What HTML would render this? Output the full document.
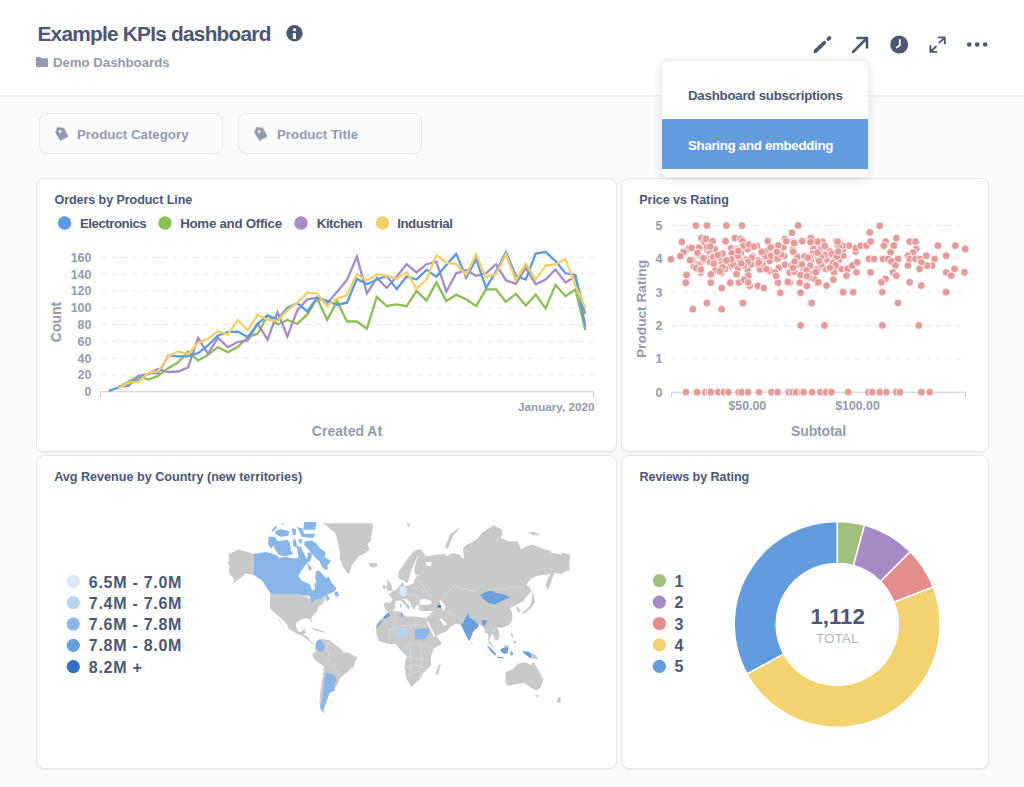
<!DOCTYPE html>
<html><head><meta charset="utf-8">
<style>
*{box-sizing:border-box;margin:0;padding:0}
html,body{width:1024px;height:787px;overflow:hidden;background:#F9FBFC;font-family:"Liberation Sans",sans-serif;color:#4C5773}
.abs{position:absolute}
#hdr{position:absolute;left:0;top:0;width:1024px;height:97px;background:#fff;border-bottom:2px solid #F0F1F3}
.t{position:absolute;white-space:nowrap;font-weight:700;line-height:1}
.card{position:absolute;background:#fff;border:1px solid #E4E6EA;border-radius:8px;box-shadow:0 1px 2px rgba(0,0,0,0.06)}
.filter{position:absolute;top:113px;height:41px;border:1.5px solid #E6E8EB;border-radius:8px;background:#FAFBFC}
.menu{position:absolute;left:661px;top:60px;width:208px;height:118px;background:#fff;border:1px solid #EDEFF2;border-radius:7px;box-shadow:0 0 10px rgba(0,0,0,0.07),0 4px 10px rgba(0,0,0,0.05);overflow:hidden}
</style></head>
<body>
<div id="hdr"></div>
<div class="t" style="left:37.5px;top:23.8px;font-size:20.8px;letter-spacing:-0.75px;color:#4C5773">Example KPIs dashboard</div>
<!-- info icon -->
<svg class="abs" style="left:286px;top:25px" width="17" height="17" viewBox="0 0 17 17"><circle cx="8.5" cy="8.3" r="8.2" fill="#4C5773"/><rect x="6.9" y="8.2" width="3.1" height="5.7" fill="#fff"/><rect x="6.9" y="3.2" width="3.1" height="3.1" rx="1.3" fill="#fff"/></svg>
<!-- folder icon -->
<svg class="abs" style="left:36px;top:57px" width="12" height="10" viewBox="0 0 12 10"><path d="M0 1 Q0 0 1 0 H4.5 L5.5 1.2 H11 Q12 1.2 12 2.2 V9 Q12 10 11 10 H1 Q0 10 0 9 Z" fill="#949AAB"/></svg>
<div class="t" style="left:53px;top:56px;font-size:13.2px;color:#949AAB">Demo Dashboards</div>

<!-- header icons -->
<svg class="abs" style="left:805px;top:30px" width="30" height="30" viewBox="0 0 30 30"><path d="M10.7 20.9 L19.4 12.7" stroke="#4C5773" stroke-width="3.7" stroke-linecap="round"/><path d="M23.3 9.0 L24.5 7.9" stroke="#4C5773" stroke-width="3.7" stroke-linecap="round"/><path d="M9 19.6 L12 22.6 L8.6 23.6 Z" fill="#4C5773"/></svg>
<svg class="abs" style="left:849px;top:34px" width="22" height="22" viewBox="0 0 22 22"><path d="M4 18 L17.5 4.5 M8.5 4 H18 V13.5" stroke="#4C5773" stroke-width="2.6" fill="none" stroke-linecap="round" stroke-linejoin="round"/></svg>
<svg class="abs" style="left:889px;top:35px" width="20" height="20" viewBox="0 0 20 20"><circle cx="10.2" cy="9.6" r="9" fill="#4C5773"/><path d="M10.8 4.8 V10.2 L7.6 12.6" stroke="#fff" stroke-width="1.8" fill="none" stroke-linecap="round" stroke-linejoin="round"/></svg>
<svg class="abs" style="left:926px;top:34px" width="22" height="22" viewBox="0 0 22 22"><path d="M13.4 8.6 L18.2 4.1 M12.6 3.4 H18.8 V9.4 M9.8 12.7 L5 17.2 M4.4 11.9 V17.9 H10.6" stroke="#4C5773" stroke-width="1.9" fill="none" stroke-linecap="round" stroke-linejoin="miter"/></svg>
<svg class="abs" style="left:965px;top:40px" width="24" height="9" viewBox="0 0 24 9"><circle cx="4.2" cy="4.5" r="2.3" fill="#4C5773"/><circle cx="12.2" cy="4.5" r="2.3" fill="#4C5773"/><circle cx="20.2" cy="4.5" r="2.3" fill="#4C5773"/></svg>

<!-- filters -->
<div class="filter" style="left:39px;width:184px"></div>
<div class="filter" style="left:238px;width:184px"></div>
<svg class="abs" style="left:55px;top:127px" width="14" height="14" viewBox="0 0 14 14"><path d="M2.3 0.5 L8.7 1.0 L13.1 9.3 L5.5 13.7 L0.6 5.5 Z" fill="#949AAB" stroke="#949AAB" stroke-width="0.6" stroke-linejoin="round"/><circle cx="5.2" cy="4.4" r="1.3" fill="#FAFBFC"/></svg>
<div class="t" style="left:77px;top:128px;font-size:13.3px;color:#949AAB">Product Category</div>
<svg class="abs" style="left:254px;top:127px" width="14" height="14" viewBox="0 0 14 14"><path d="M2.3 0.5 L8.7 1.0 L13.1 9.3 L5.5 13.7 L0.6 5.5 Z" fill="#949AAB" stroke="#949AAB" stroke-width="0.6" stroke-linejoin="round"/><circle cx="5.2" cy="4.4" r="1.3" fill="#FAFBFC"/></svg>
<div class="t" style="left:277px;top:128px;font-size:13.3px;color:#949AAB">Product Title</div>

<!-- cards -->
<div class="card" style="left:36px;top:178px;width:581px;height:274px"></div>
<div class="card" style="left:621px;top:178px;width:368px;height:274px"></div>
<div class="card" style="left:36px;top:455px;width:581px;height:314px"></div>
<div class="card" style="left:621px;top:455px;width:368px;height:314px"></div>

<svg class="abs" style="left:0;top:0" width="1024" height="787">
<line x1="101.9" y1="374.9" x2="594" y2="374.9" stroke="#E8EBEE" stroke-width="1" stroke-dasharray="5.2 4.95"/>
<line x1="101.9" y1="358.1" x2="594" y2="358.1" stroke="#E8EBEE" stroke-width="1" stroke-dasharray="5.2 4.95"/>
<line x1="101.9" y1="341.3" x2="594" y2="341.3" stroke="#E8EBEE" stroke-width="1" stroke-dasharray="5.2 4.95"/>
<line x1="101.9" y1="324.5" x2="594" y2="324.5" stroke="#E8EBEE" stroke-width="1" stroke-dasharray="5.2 4.95"/>
<line x1="101.9" y1="307.7" x2="594" y2="307.7" stroke="#E8EBEE" stroke-width="1" stroke-dasharray="5.2 4.95"/>
<line x1="101.9" y1="290.9" x2="594" y2="290.9" stroke="#E8EBEE" stroke-width="1" stroke-dasharray="5.2 4.95"/>
<line x1="101.9" y1="274.1" x2="594" y2="274.1" stroke="#E8EBEE" stroke-width="1" stroke-dasharray="5.2 4.95"/>
<line x1="101.9" y1="257.3" x2="594" y2="257.3" stroke="#E8EBEE" stroke-width="1" stroke-dasharray="5.2 4.95"/>
<path d="M100.5 397.5 V391.8 H593.5 V397.5" stroke="#C5CAD3" stroke-width="1" fill="none"/>
<polyline points="118.6,387.5 128.6,381.6 138.5,376.6 148.4,379.5 158.3,375.7 168.3,368.2 178.2,362.3 188.1,351.4 198.1,360.6 208.0,354.7 217.9,347.2 227.9,352.2 237.8,346.8 247.7,337.1 257.6,333.7 267.6,315.3 277.5,324.5 287.4,319.9 297.4,323.7 307.3,314.4 317.2,298.5 327.2,319.9 337.1,301.0 347.0,321.5 356.9,321.5 366.9,328.7 376.8,296.8 386.7,306.0 396.7,304.3 406.6,306.2 416.5,290.9 426.5,300.6 436.4,282.5 446.3,301.0 456.2,294.7 466.2,299.3 476.1,306.2 486.0,289.4 496.0,289.4 505.9,301.8 515.8,293.9 525.8,305.6 535.7,294.7 545.6,308.5 555.5,284.8 565.5,296.3 575.4,289.4 585.3,329.9" fill="none" stroke="#8CBE55" stroke-width="2.3" stroke-linejoin="miter"/>
<polyline points="118.6,386.7 128.6,385.8 138.5,375.7 148.4,374.1 158.3,369.0 168.3,372.0 178.2,371.5 188.1,367.3 198.1,337.9 208.0,353.9 217.9,337.9 227.9,347.2 237.8,342.1 247.7,340.5 257.6,323.7 267.6,339.6 277.5,312.3 287.4,336.3 297.4,310.2 307.3,299.3 317.2,297.6 327.2,303.1 337.1,291.7 347.0,280.0 356.9,256.5 366.9,293.4 376.8,277.9 386.7,287.9 396.7,276.6 406.6,264.2 416.5,272.4 426.5,264.2 436.4,261.9 446.3,291.7 456.2,273.3 466.2,269.9 476.1,275.8 486.0,273.3 496.0,264.2 505.9,280.2 515.8,283.9 525.8,267.8 535.7,284.2 545.6,279.5 555.5,269.5 565.5,282.5 575.4,276.6 585.3,313.8" fill="none" stroke="#A78BC7" stroke-width="2.3" stroke-linejoin="miter"/>
<polyline points="108.7,390.9 118.6,387.5 128.6,383.3 138.5,379.9 148.4,373.2 158.3,373.2 168.3,355.6 178.2,356.4 188.1,356.4 198.1,353.1 208.0,345.5 217.9,335.4 227.9,332.1 237.8,331.6 247.7,337.1 257.6,323.7 267.6,315.3 277.5,319.9 287.4,307.7 297.4,303.1 307.3,311.5 317.2,297.6 327.2,301.0 337.1,304.7 347.0,302.7 356.9,278.7 366.9,284.2 376.8,279.5 386.7,275.8 396.7,289.2 406.6,276.6 416.5,279.5 426.5,269.9 436.4,276.6 446.3,264.9 456.2,253.9 466.2,277.5 476.1,259.0 486.0,287.9 496.0,271.6 505.9,252.3 515.8,275.8 525.8,279.5 535.7,253.5 545.6,251.9 555.5,261.1 565.5,273.3 575.4,274.9 585.3,326.2" fill="none" stroke="#5C9BE0" stroke-width="2.3" stroke-linejoin="miter"/>
<polyline points="118.6,387.9 128.6,382.5 138.5,381.6 148.4,372.8 158.3,371.5 168.3,356.4 178.2,351.4 188.1,353.9 198.1,343.0 208.0,338.8 217.9,331.2 227.9,334.6 237.8,320.3 247.7,330.4 257.6,314.8 267.6,319.9 277.5,320.7 287.4,310.2 297.4,302.7 307.3,292.6 317.2,293.7 327.2,306.0 337.1,298.5 347.0,295.1 356.9,274.1 366.9,280.8 376.8,274.1 386.7,275.8 396.7,278.7 406.6,272.4 416.5,288.6 426.5,279.5 436.4,255.0 446.3,262.7 456.2,264.2 466.2,274.9 476.1,254.3 486.0,277.1 496.0,274.1 505.9,254.3 515.8,280.2 525.8,264.0 535.7,279.5 545.6,265.7 555.5,264.4 565.5,259.0 575.4,285.9 585.3,307.7" fill="none" stroke="#F3CF66" stroke-width="2.3" stroke-linejoin="miter"/>
<line x1="672" y1="358.8" x2="966" y2="358.8" stroke="#E8EBEE" stroke-width="1" stroke-dasharray="5.2 4.95"/>
<line x1="672" y1="325.4" x2="966" y2="325.4" stroke="#E8EBEE" stroke-width="1" stroke-dasharray="5.2 4.95"/>
<line x1="672" y1="292.1" x2="966" y2="292.1" stroke="#E8EBEE" stroke-width="1" stroke-dasharray="5.2 4.95"/>
<line x1="672" y1="258.7" x2="966" y2="258.7" stroke="#E8EBEE" stroke-width="1" stroke-dasharray="5.2 4.95"/>
<line x1="672" y1="225.3" x2="966" y2="225.3" stroke="#E8EBEE" stroke-width="1" stroke-dasharray="5.2 4.95"/>
<path d="M671.5 397.5 V392.2 H965.5 V397.5" stroke="#C5CAD3" stroke-width="1" fill="none"/>
<circle cx="695.9" cy="225.6" r="3.9" fill="#E39C9B" stroke="#fff" stroke-width="0.8"/>
<circle cx="706.9" cy="225.6" r="3.9" fill="#E39C9B" stroke="#fff" stroke-width="0.8"/>
<circle cx="726.4" cy="225.6" r="3.9" fill="#E39C9B" stroke="#fff" stroke-width="0.8"/>
<circle cx="742.0" cy="225.6" r="3.9" fill="#E39C9B" stroke="#fff" stroke-width="0.8"/>
<circle cx="798.3" cy="225.6" r="3.9" fill="#E39C9B" stroke="#fff" stroke-width="0.8"/>
<circle cx="681.9" cy="242.0" r="3.9" fill="#E39C9B" stroke="#fff" stroke-width="0.8"/>
<circle cx="701.4" cy="238.1" r="3.9" fill="#E39C9B" stroke="#fff" stroke-width="0.8"/>
<circle cx="704.5" cy="242.0" r="3.9" fill="#E39C9B" stroke="#fff" stroke-width="0.8"/>
<circle cx="688.9" cy="248.3" r="3.9" fill="#E39C9B" stroke="#fff" stroke-width="0.8"/>
<circle cx="683.4" cy="252.2" r="3.9" fill="#E39C9B" stroke="#fff" stroke-width="0.8"/>
<circle cx="680.3" cy="256.1" r="3.9" fill="#E39C9B" stroke="#fff" stroke-width="0.8"/>
<circle cx="670.9" cy="259.2" r="3.9" fill="#E39C9B" stroke="#fff" stroke-width="0.8"/>
<circle cx="692.8" cy="259.2" r="3.9" fill="#E39C9B" stroke="#fff" stroke-width="0.8"/>
<circle cx="699.1" cy="255.3" r="3.9" fill="#E39C9B" stroke="#fff" stroke-width="0.8"/>
<circle cx="706.9" cy="249.1" r="3.9" fill="#E39C9B" stroke="#fff" stroke-width="0.8"/>
<circle cx="714.7" cy="249.1" r="3.9" fill="#E39C9B" stroke="#fff" stroke-width="0.8"/>
<circle cx="720.9" cy="259.2" r="3.9" fill="#E39C9B" stroke="#fff" stroke-width="0.8"/>
<circle cx="725.6" cy="241.2" r="3.9" fill="#E39C9B" stroke="#fff" stroke-width="0.8"/>
<circle cx="735.0" cy="238.1" r="3.9" fill="#E39C9B" stroke="#fff" stroke-width="0.8"/>
<circle cx="740.5" cy="238.9" r="3.9" fill="#E39C9B" stroke="#fff" stroke-width="0.8"/>
<circle cx="731.1" cy="248.3" r="3.9" fill="#E39C9B" stroke="#fff" stroke-width="0.8"/>
<circle cx="736.6" cy="249.1" r="3.9" fill="#E39C9B" stroke="#fff" stroke-width="0.8"/>
<circle cx="745.9" cy="245.9" r="3.9" fill="#E39C9B" stroke="#fff" stroke-width="0.8"/>
<circle cx="741.2" cy="256.9" r="3.9" fill="#E39C9B" stroke="#fff" stroke-width="0.8"/>
<circle cx="747.5" cy="249.1" r="3.9" fill="#E39C9B" stroke="#fff" stroke-width="0.8"/>
<circle cx="756.9" cy="245.9" r="3.9" fill="#E39C9B" stroke="#fff" stroke-width="0.8"/>
<circle cx="761.6" cy="259.2" r="3.9" fill="#E39C9B" stroke="#fff" stroke-width="0.8"/>
<circle cx="766.2" cy="251.4" r="3.9" fill="#E39C9B" stroke="#fff" stroke-width="0.8"/>
<circle cx="771.7" cy="259.2" r="3.9" fill="#E39C9B" stroke="#fff" stroke-width="0.8"/>
<circle cx="767.8" cy="241.2" r="3.9" fill="#E39C9B" stroke="#fff" stroke-width="0.8"/>
<circle cx="774.1" cy="247.5" r="3.9" fill="#E39C9B" stroke="#fff" stroke-width="0.8"/>
<circle cx="785.0" cy="238.9" r="3.9" fill="#E39C9B" stroke="#fff" stroke-width="0.8"/>
<circle cx="792.0" cy="232.7" r="3.9" fill="#E39C9B" stroke="#fff" stroke-width="0.8"/>
<circle cx="792.8" cy="242.0" r="3.9" fill="#E39C9B" stroke="#fff" stroke-width="0.8"/>
<circle cx="792.8" cy="249.1" r="3.9" fill="#E39C9B" stroke="#fff" stroke-width="0.8"/>
<circle cx="802.2" cy="241.2" r="3.9" fill="#E39C9B" stroke="#fff" stroke-width="0.8"/>
<circle cx="810.0" cy="238.9" r="3.9" fill="#E39C9B" stroke="#fff" stroke-width="0.8"/>
<circle cx="810.8" cy="259.2" r="3.9" fill="#E39C9B" stroke="#fff" stroke-width="0.8"/>
<circle cx="816.2" cy="244.4" r="3.9" fill="#E39C9B" stroke="#fff" stroke-width="0.8"/>
<circle cx="817.0" cy="256.9" r="3.9" fill="#E39C9B" stroke="#fff" stroke-width="0.8"/>
<circle cx="699.1" cy="264.7" r="3.9" fill="#E39C9B" stroke="#fff" stroke-width="0.8"/>
<circle cx="700.6" cy="272.5" r="3.9" fill="#E39C9B" stroke="#fff" stroke-width="0.8"/>
<circle cx="711.6" cy="274.8" r="3.9" fill="#E39C9B" stroke="#fff" stroke-width="0.8"/>
<circle cx="716.2" cy="269.4" r="3.9" fill="#E39C9B" stroke="#fff" stroke-width="0.8"/>
<circle cx="721.7" cy="272.5" r="3.9" fill="#E39C9B" stroke="#fff" stroke-width="0.8"/>
<circle cx="730.3" cy="266.2" r="3.9" fill="#E39C9B" stroke="#fff" stroke-width="0.8"/>
<circle cx="733.4" cy="264.7" r="3.9" fill="#E39C9B" stroke="#fff" stroke-width="0.8"/>
<circle cx="738.1" cy="268.6" r="3.9" fill="#E39C9B" stroke="#fff" stroke-width="0.8"/>
<circle cx="736.6" cy="274.1" r="3.9" fill="#E39C9B" stroke="#fff" stroke-width="0.8"/>
<circle cx="747.5" cy="269.4" r="3.9" fill="#E39C9B" stroke="#fff" stroke-width="0.8"/>
<circle cx="748.3" cy="275.6" r="3.9" fill="#E39C9B" stroke="#fff" stroke-width="0.8"/>
<circle cx="756.9" cy="261.6" r="3.9" fill="#E39C9B" stroke="#fff" stroke-width="0.8"/>
<circle cx="760.0" cy="269.4" r="3.9" fill="#E39C9B" stroke="#fff" stroke-width="0.8"/>
<circle cx="769.4" cy="270.9" r="3.9" fill="#E39C9B" stroke="#fff" stroke-width="0.8"/>
<circle cx="778.8" cy="267.8" r="3.9" fill="#E39C9B" stroke="#fff" stroke-width="0.8"/>
<circle cx="785.0" cy="264.7" r="3.9" fill="#E39C9B" stroke="#fff" stroke-width="0.8"/>
<circle cx="789.7" cy="272.5" r="3.9" fill="#E39C9B" stroke="#fff" stroke-width="0.8"/>
<circle cx="794.4" cy="271.7" r="3.9" fill="#E39C9B" stroke="#fff" stroke-width="0.8"/>
<circle cx="797.5" cy="256.9" r="3.9" fill="#E39C9B" stroke="#fff" stroke-width="0.8"/>
<circle cx="803.8" cy="269.4" r="3.9" fill="#E39C9B" stroke="#fff" stroke-width="0.8"/>
<circle cx="806.9" cy="274.1" r="3.9" fill="#E39C9B" stroke="#fff" stroke-width="0.8"/>
<circle cx="814.7" cy="278.8" r="3.9" fill="#E39C9B" stroke="#fff" stroke-width="0.8"/>
<circle cx="816.2" cy="269.4" r="3.9" fill="#E39C9B" stroke="#fff" stroke-width="0.8"/>
<circle cx="686.6" cy="274.8" r="3.9" fill="#E39C9B" stroke="#fff" stroke-width="0.8"/>
<circle cx="685.8" cy="282.7" r="3.9" fill="#E39C9B" stroke="#fff" stroke-width="0.8"/>
<circle cx="710.8" cy="282.7" r="3.9" fill="#E39C9B" stroke="#fff" stroke-width="0.8"/>
<circle cx="721.7" cy="288.1" r="3.9" fill="#E39C9B" stroke="#fff" stroke-width="0.8"/>
<circle cx="730.3" cy="282.7" r="3.9" fill="#E39C9B" stroke="#fff" stroke-width="0.8"/>
<circle cx="738.9" cy="282.7" r="3.9" fill="#E39C9B" stroke="#fff" stroke-width="0.8"/>
<circle cx="749.8" cy="285.8" r="3.9" fill="#E39C9B" stroke="#fff" stroke-width="0.8"/>
<circle cx="757.7" cy="285.8" r="3.9" fill="#E39C9B" stroke="#fff" stroke-width="0.8"/>
<circle cx="763.9" cy="288.1" r="3.9" fill="#E39C9B" stroke="#fff" stroke-width="0.8"/>
<circle cx="778.0" cy="282.7" r="3.9" fill="#E39C9B" stroke="#fff" stroke-width="0.8"/>
<circle cx="789.7" cy="282.7" r="3.9" fill="#E39C9B" stroke="#fff" stroke-width="0.8"/>
<circle cx="799.8" cy="282.7" r="3.9" fill="#E39C9B" stroke="#fff" stroke-width="0.8"/>
<circle cx="806.9" cy="285.8" r="3.9" fill="#E39C9B" stroke="#fff" stroke-width="0.8"/>
<circle cx="817.8" cy="282.7" r="3.9" fill="#E39C9B" stroke="#fff" stroke-width="0.8"/>
<circle cx="780.3" cy="292.8" r="3.9" fill="#E39C9B" stroke="#fff" stroke-width="0.8"/>
<circle cx="800.6" cy="292.8" r="3.9" fill="#E39C9B" stroke="#fff" stroke-width="0.8"/>
<circle cx="706.9" cy="303.0" r="3.9" fill="#E39C9B" stroke="#fff" stroke-width="0.8"/>
<circle cx="742.8" cy="303.0" r="3.9" fill="#E39C9B" stroke="#fff" stroke-width="0.8"/>
<circle cx="810.8" cy="303.0" r="3.9" fill="#E39C9B" stroke="#fff" stroke-width="0.8"/>
<circle cx="692.8" cy="309.2" r="3.9" fill="#E39C9B" stroke="#fff" stroke-width="0.8"/>
<circle cx="721.7" cy="309.2" r="3.9" fill="#E39C9B" stroke="#fff" stroke-width="0.8"/>
<circle cx="810.8" cy="238.2" r="3.9" fill="#E39C9B" stroke="#fff" stroke-width="0.8"/>
<circle cx="822.5" cy="241.6" r="3.9" fill="#E39C9B" stroke="#fff" stroke-width="0.8"/>
<circle cx="817.5" cy="241.6" r="3.9" fill="#E39C9B" stroke="#fff" stroke-width="0.8"/>
<circle cx="813.3" cy="249.0" r="3.9" fill="#E39C9B" stroke="#fff" stroke-width="0.8"/>
<circle cx="822.5" cy="251.5" r="3.9" fill="#E39C9B" stroke="#fff" stroke-width="0.8"/>
<circle cx="829.9" cy="251.5" r="3.9" fill="#E39C9B" stroke="#fff" stroke-width="0.8"/>
<circle cx="810.0" cy="259.0" r="3.9" fill="#E39C9B" stroke="#fff" stroke-width="0.8"/>
<circle cx="811.7" cy="259.0" r="3.9" fill="#E39C9B" stroke="#fff" stroke-width="0.8"/>
<circle cx="818.3" cy="259.0" r="3.9" fill="#E39C9B" stroke="#fff" stroke-width="0.8"/>
<circle cx="823.3" cy="259.0" r="3.9" fill="#E39C9B" stroke="#fff" stroke-width="0.8"/>
<circle cx="826.6" cy="259.8" r="3.9" fill="#E39C9B" stroke="#fff" stroke-width="0.8"/>
<circle cx="834.9" cy="259.0" r="3.9" fill="#E39C9B" stroke="#fff" stroke-width="0.8"/>
<circle cx="839.1" cy="259.8" r="3.9" fill="#E39C9B" stroke="#fff" stroke-width="0.8"/>
<circle cx="843.2" cy="255.7" r="3.9" fill="#E39C9B" stroke="#fff" stroke-width="0.8"/>
<circle cx="843.2" cy="249.0" r="3.9" fill="#E39C9B" stroke="#fff" stroke-width="0.8"/>
<circle cx="849.0" cy="245.7" r="3.9" fill="#E39C9B" stroke="#fff" stroke-width="0.8"/>
<circle cx="837.4" cy="245.7" r="3.9" fill="#E39C9B" stroke="#fff" stroke-width="0.8"/>
<circle cx="842.4" cy="245.7" r="3.9" fill="#E39C9B" stroke="#fff" stroke-width="0.8"/>
<circle cx="855.7" cy="251.5" r="3.9" fill="#E39C9B" stroke="#fff" stroke-width="0.8"/>
<circle cx="855.7" cy="248.2" r="3.9" fill="#E39C9B" stroke="#fff" stroke-width="0.8"/>
<circle cx="860.7" cy="245.7" r="3.9" fill="#E39C9B" stroke="#fff" stroke-width="0.8"/>
<circle cx="866.5" cy="245.7" r="3.9" fill="#E39C9B" stroke="#fff" stroke-width="0.8"/>
<circle cx="870.6" cy="241.6" r="3.9" fill="#E39C9B" stroke="#fff" stroke-width="0.8"/>
<circle cx="869.8" cy="232.4" r="3.9" fill="#E39C9B" stroke="#fff" stroke-width="0.8"/>
<circle cx="879.8" cy="225.8" r="3.9" fill="#E39C9B" stroke="#fff" stroke-width="0.8"/>
<circle cx="885.6" cy="241.6" r="3.9" fill="#E39C9B" stroke="#fff" stroke-width="0.8"/>
<circle cx="883.9" cy="245.7" r="3.9" fill="#E39C9B" stroke="#fff" stroke-width="0.8"/>
<circle cx="896.4" cy="238.2" r="3.9" fill="#E39C9B" stroke="#fff" stroke-width="0.8"/>
<circle cx="893.9" cy="245.7" r="3.9" fill="#E39C9B" stroke="#fff" stroke-width="0.8"/>
<circle cx="890.6" cy="252.4" r="3.9" fill="#E39C9B" stroke="#fff" stroke-width="0.8"/>
<circle cx="869.0" cy="259.0" r="3.9" fill="#E39C9B" stroke="#fff" stroke-width="0.8"/>
<circle cx="874.0" cy="259.0" r="3.9" fill="#E39C9B" stroke="#fff" stroke-width="0.8"/>
<circle cx="883.1" cy="259.0" r="3.9" fill="#E39C9B" stroke="#fff" stroke-width="0.8"/>
<circle cx="888.1" cy="259.0" r="3.9" fill="#E39C9B" stroke="#fff" stroke-width="0.8"/>
<circle cx="898.0" cy="259.0" r="3.9" fill="#E39C9B" stroke="#fff" stroke-width="0.8"/>
<circle cx="891.4" cy="261.5" r="3.9" fill="#E39C9B" stroke="#fff" stroke-width="0.8"/>
<circle cx="895.5" cy="265.6" r="3.9" fill="#E39C9B" stroke="#fff" stroke-width="0.8"/>
<circle cx="810.0" cy="265.6" r="3.9" fill="#E39C9B" stroke="#fff" stroke-width="0.8"/>
<circle cx="817.5" cy="269.0" r="3.9" fill="#E39C9B" stroke="#fff" stroke-width="0.8"/>
<circle cx="825.8" cy="269.0" r="3.9" fill="#E39C9B" stroke="#fff" stroke-width="0.8"/>
<circle cx="834.1" cy="272.3" r="3.9" fill="#E39C9B" stroke="#fff" stroke-width="0.8"/>
<circle cx="831.6" cy="264.8" r="3.9" fill="#E39C9B" stroke="#fff" stroke-width="0.8"/>
<circle cx="841.6" cy="269.0" r="3.9" fill="#E39C9B" stroke="#fff" stroke-width="0.8"/>
<circle cx="847.4" cy="269.0" r="3.9" fill="#E39C9B" stroke="#fff" stroke-width="0.8"/>
<circle cx="852.4" cy="265.6" r="3.9" fill="#E39C9B" stroke="#fff" stroke-width="0.8"/>
<circle cx="857.3" cy="262.3" r="3.9" fill="#E39C9B" stroke="#fff" stroke-width="0.8"/>
<circle cx="856.5" cy="272.3" r="3.9" fill="#E39C9B" stroke="#fff" stroke-width="0.8"/>
<circle cx="846.5" cy="275.6" r="3.9" fill="#E39C9B" stroke="#fff" stroke-width="0.8"/>
<circle cx="810.0" cy="274.0" r="3.9" fill="#E39C9B" stroke="#fff" stroke-width="0.8"/>
<circle cx="814.2" cy="278.9" r="3.9" fill="#E39C9B" stroke="#fff" stroke-width="0.8"/>
<circle cx="818.3" cy="282.3" r="3.9" fill="#E39C9B" stroke="#fff" stroke-width="0.8"/>
<circle cx="826.6" cy="285.6" r="3.9" fill="#E39C9B" stroke="#fff" stroke-width="0.8"/>
<circle cx="843.2" cy="292.2" r="3.9" fill="#E39C9B" stroke="#fff" stroke-width="0.8"/>
<circle cx="853.2" cy="292.2" r="3.9" fill="#E39C9B" stroke="#fff" stroke-width="0.8"/>
<circle cx="870.6" cy="272.3" r="3.9" fill="#E39C9B" stroke="#fff" stroke-width="0.8"/>
<circle cx="885.6" cy="278.9" r="3.9" fill="#E39C9B" stroke="#fff" stroke-width="0.8"/>
<circle cx="881.4" cy="282.3" r="3.9" fill="#E39C9B" stroke="#fff" stroke-width="0.8"/>
<circle cx="882.3" cy="292.2" r="3.9" fill="#E39C9B" stroke="#fff" stroke-width="0.8"/>
<circle cx="893.1" cy="272.3" r="3.9" fill="#E39C9B" stroke="#fff" stroke-width="0.8"/>
<circle cx="896.4" cy="275.6" r="3.9" fill="#E39C9B" stroke="#fff" stroke-width="0.8"/>
<circle cx="898.0" cy="303.0" r="3.9" fill="#E39C9B" stroke="#fff" stroke-width="0.8"/>
<circle cx="811.7" cy="303.0" r="3.9" fill="#E39C9B" stroke="#fff" stroke-width="0.8"/>
<circle cx="909.7" cy="241.6" r="3.9" fill="#E39C9B" stroke="#fff" stroke-width="0.8"/>
<circle cx="915.5" cy="241.6" r="3.9" fill="#E39C9B" stroke="#fff" stroke-width="0.8"/>
<circle cx="916.3" cy="249.0" r="3.9" fill="#E39C9B" stroke="#fff" stroke-width="0.8"/>
<circle cx="913.0" cy="252.4" r="3.9" fill="#E39C9B" stroke="#fff" stroke-width="0.8"/>
<circle cx="908.0" cy="255.7" r="3.9" fill="#E39C9B" stroke="#fff" stroke-width="0.8"/>
<circle cx="909.7" cy="259.0" r="3.9" fill="#E39C9B" stroke="#fff" stroke-width="0.8"/>
<circle cx="915.5" cy="259.0" r="3.9" fill="#E39C9B" stroke="#fff" stroke-width="0.8"/>
<circle cx="920.5" cy="259.0" r="3.9" fill="#E39C9B" stroke="#fff" stroke-width="0.8"/>
<circle cx="926.3" cy="255.7" r="3.9" fill="#E39C9B" stroke="#fff" stroke-width="0.8"/>
<circle cx="934.6" cy="259.0" r="3.9" fill="#E39C9B" stroke="#fff" stroke-width="0.8"/>
<circle cx="932.1" cy="265.6" r="3.9" fill="#E39C9B" stroke="#fff" stroke-width="0.8"/>
<circle cx="927.1" cy="265.6" r="3.9" fill="#E39C9B" stroke="#fff" stroke-width="0.8"/>
<circle cx="921.3" cy="262.3" r="3.9" fill="#E39C9B" stroke="#fff" stroke-width="0.8"/>
<circle cx="908.0" cy="265.6" r="3.9" fill="#E39C9B" stroke="#fff" stroke-width="0.8"/>
<circle cx="919.6" cy="269.0" r="3.9" fill="#E39C9B" stroke="#fff" stroke-width="0.8"/>
<circle cx="909.7" cy="282.3" r="3.9" fill="#E39C9B" stroke="#fff" stroke-width="0.8"/>
<circle cx="921.3" cy="285.6" r="3.9" fill="#E39C9B" stroke="#fff" stroke-width="0.8"/>
<circle cx="937.9" cy="245.7" r="3.9" fill="#E39C9B" stroke="#fff" stroke-width="0.8"/>
<circle cx="955.3" cy="245.7" r="3.9" fill="#E39C9B" stroke="#fff" stroke-width="0.8"/>
<circle cx="965.3" cy="249.0" r="3.9" fill="#E39C9B" stroke="#fff" stroke-width="0.8"/>
<circle cx="946.2" cy="255.7" r="3.9" fill="#E39C9B" stroke="#fff" stroke-width="0.8"/>
<circle cx="946.2" cy="272.3" r="3.9" fill="#E39C9B" stroke="#fff" stroke-width="0.8"/>
<circle cx="954.5" cy="269.0" r="3.9" fill="#E39C9B" stroke="#fff" stroke-width="0.8"/>
<circle cx="951.2" cy="275.6" r="3.9" fill="#E39C9B" stroke="#fff" stroke-width="0.8"/>
<circle cx="964.5" cy="272.3" r="3.9" fill="#E39C9B" stroke="#fff" stroke-width="0.8"/>
<circle cx="946.2" cy="292.2" r="3.9" fill="#E39C9B" stroke="#fff" stroke-width="0.8"/>
<circle cx="737.2" cy="250.8" r="3.9" fill="#E39C9B" stroke="#fff" stroke-width="0.8"/>
<circle cx="699.0" cy="247.7" r="3.9" fill="#E39C9B" stroke="#fff" stroke-width="0.8"/>
<circle cx="769.5" cy="260.8" r="3.9" fill="#E39C9B" stroke="#fff" stroke-width="0.8"/>
<circle cx="765.1" cy="256.3" r="3.9" fill="#E39C9B" stroke="#fff" stroke-width="0.8"/>
<circle cx="693.7" cy="261.9" r="3.9" fill="#E39C9B" stroke="#fff" stroke-width="0.8"/>
<circle cx="701.8" cy="257.2" r="3.9" fill="#E39C9B" stroke="#fff" stroke-width="0.8"/>
<circle cx="752.5" cy="256.4" r="3.9" fill="#E39C9B" stroke="#fff" stroke-width="0.8"/>
<circle cx="721.9" cy="262.9" r="3.9" fill="#E39C9B" stroke="#fff" stroke-width="0.8"/>
<circle cx="783.4" cy="247.1" r="3.9" fill="#E39C9B" stroke="#fff" stroke-width="0.8"/>
<circle cx="748.3" cy="262.6" r="3.9" fill="#E39C9B" stroke="#fff" stroke-width="0.8"/>
<circle cx="836.4" cy="241.0" r="3.9" fill="#E39C9B" stroke="#fff" stroke-width="0.8"/>
<circle cx="732.0" cy="253.3" r="3.9" fill="#E39C9B" stroke="#fff" stroke-width="0.8"/>
<circle cx="709.9" cy="252.8" r="3.9" fill="#E39C9B" stroke="#fff" stroke-width="0.8"/>
<circle cx="812.1" cy="253.3" r="3.9" fill="#E39C9B" stroke="#fff" stroke-width="0.8"/>
<circle cx="715.5" cy="270.3" r="3.9" fill="#E39C9B" stroke="#fff" stroke-width="0.8"/>
<circle cx="744.6" cy="265.2" r="3.9" fill="#E39C9B" stroke="#fff" stroke-width="0.8"/>
<circle cx="771.3" cy="255.7" r="3.9" fill="#E39C9B" stroke="#fff" stroke-width="0.8"/>
<circle cx="719.3" cy="257.4" r="3.9" fill="#E39C9B" stroke="#fff" stroke-width="0.8"/>
<circle cx="791.4" cy="266.0" r="3.9" fill="#E39C9B" stroke="#fff" stroke-width="0.8"/>
<circle cx="777.0" cy="255.1" r="3.9" fill="#E39C9B" stroke="#fff" stroke-width="0.8"/>
<circle cx="756.9" cy="263.8" r="3.9" fill="#E39C9B" stroke="#fff" stroke-width="0.8"/>
<circle cx="794.2" cy="242.9" r="3.9" fill="#E39C9B" stroke="#fff" stroke-width="0.8"/>
<circle cx="725.1" cy="268.9" r="3.9" fill="#E39C9B" stroke="#fff" stroke-width="0.8"/>
<circle cx="821.0" cy="263.8" r="3.9" fill="#E39C9B" stroke="#fff" stroke-width="0.8"/>
<circle cx="798.9" cy="264.9" r="3.9" fill="#E39C9B" stroke="#fff" stroke-width="0.8"/>
<circle cx="705.9" cy="238.7" r="3.9" fill="#E39C9B" stroke="#fff" stroke-width="0.8"/>
<circle cx="751.6" cy="258.4" r="3.9" fill="#E39C9B" stroke="#fff" stroke-width="0.8"/>
<circle cx="762.3" cy="264.0" r="3.9" fill="#E39C9B" stroke="#fff" stroke-width="0.8"/>
<circle cx="694.0" cy="266.5" r="3.9" fill="#E39C9B" stroke="#fff" stroke-width="0.8"/>
<circle cx="775.1" cy="272.5" r="3.9" fill="#E39C9B" stroke="#fff" stroke-width="0.8"/>
<circle cx="821.1" cy="264.3" r="3.9" fill="#E39C9B" stroke="#fff" stroke-width="0.8"/>
<circle cx="778.3" cy="245.4" r="3.9" fill="#E39C9B" stroke="#fff" stroke-width="0.8"/>
<circle cx="776.1" cy="275.9" r="3.9" fill="#E39C9B" stroke="#fff" stroke-width="0.8"/>
<circle cx="831.6" cy="253.8" r="3.9" fill="#E39C9B" stroke="#fff" stroke-width="0.8"/>
<circle cx="760.1" cy="260.4" r="3.9" fill="#E39C9B" stroke="#fff" stroke-width="0.8"/>
<circle cx="794.6" cy="261.5" r="3.9" fill="#E39C9B" stroke="#fff" stroke-width="0.8"/>
<circle cx="786.4" cy="241.3" r="3.9" fill="#E39C9B" stroke="#fff" stroke-width="0.8"/>
<circle cx="731.3" cy="259.4" r="3.9" fill="#E39C9B" stroke="#fff" stroke-width="0.8"/>
<circle cx="746.6" cy="259.7" r="3.9" fill="#E39C9B" stroke="#fff" stroke-width="0.8"/>
<circle cx="758.2" cy="260.4" r="3.9" fill="#E39C9B" stroke="#fff" stroke-width="0.8"/>
<circle cx="713.5" cy="256.3" r="3.9" fill="#E39C9B" stroke="#fff" stroke-width="0.8"/>
<circle cx="804.8" cy="256.5" r="3.9" fill="#E39C9B" stroke="#fff" stroke-width="0.8"/>
<circle cx="707.7" cy="258.5" r="3.9" fill="#E39C9B" stroke="#fff" stroke-width="0.8"/>
<circle cx="820.5" cy="249.4" r="3.9" fill="#E39C9B" stroke="#fff" stroke-width="0.8"/>
<circle cx="700.2" cy="269.9" r="3.9" fill="#E39C9B" stroke="#fff" stroke-width="0.8"/>
<circle cx="822.3" cy="255.0" r="3.9" fill="#E39C9B" stroke="#fff" stroke-width="0.8"/>
<circle cx="812.5" cy="253.7" r="3.9" fill="#E39C9B" stroke="#fff" stroke-width="0.8"/>
<circle cx="751.1" cy="264.4" r="3.9" fill="#E39C9B" stroke="#fff" stroke-width="0.8"/>
<circle cx="742.5" cy="241.1" r="3.9" fill="#E39C9B" stroke="#fff" stroke-width="0.8"/>
<circle cx="710.9" cy="274.3" r="3.9" fill="#E39C9B" stroke="#fff" stroke-width="0.8"/>
<circle cx="714.8" cy="257.9" r="3.9" fill="#E39C9B" stroke="#fff" stroke-width="0.8"/>
<circle cx="761.7" cy="251.9" r="3.9" fill="#E39C9B" stroke="#fff" stroke-width="0.8"/>
<circle cx="777.5" cy="258.7" r="3.9" fill="#E39C9B" stroke="#fff" stroke-width="0.8"/>
<circle cx="751.7" cy="257.8" r="3.9" fill="#E39C9B" stroke="#fff" stroke-width="0.8"/>
<circle cx="744.1" cy="279.8" r="3.9" fill="#E39C9B" stroke="#fff" stroke-width="0.8"/>
<circle cx="793.0" cy="268.0" r="3.9" fill="#E39C9B" stroke="#fff" stroke-width="0.8"/>
<circle cx="766.4" cy="269.1" r="3.9" fill="#E39C9B" stroke="#fff" stroke-width="0.8"/>
<circle cx="696.2" cy="268.1" r="3.9" fill="#E39C9B" stroke="#fff" stroke-width="0.8"/>
<circle cx="824.7" cy="255.1" r="3.9" fill="#E39C9B" stroke="#fff" stroke-width="0.8"/>
<circle cx="809.3" cy="277.4" r="3.9" fill="#E39C9B" stroke="#fff" stroke-width="0.8"/>
<circle cx="747.6" cy="262.2" r="3.9" fill="#E39C9B" stroke="#fff" stroke-width="0.8"/>
<circle cx="784.4" cy="256.1" r="3.9" fill="#E39C9B" stroke="#fff" stroke-width="0.8"/>
<circle cx="697.5" cy="252.8" r="3.9" fill="#E39C9B" stroke="#fff" stroke-width="0.8"/>
<circle cx="712.7" cy="256.1" r="3.9" fill="#E39C9B" stroke="#fff" stroke-width="0.8"/>
<circle cx="739.7" cy="258.5" r="3.9" fill="#E39C9B" stroke="#fff" stroke-width="0.8"/>
<circle cx="711.0" cy="258.6" r="3.9" fill="#E39C9B" stroke="#fff" stroke-width="0.8"/>
<circle cx="703.4" cy="260.1" r="3.9" fill="#E39C9B" stroke="#fff" stroke-width="0.8"/>
<circle cx="820.9" cy="257.1" r="3.9" fill="#E39C9B" stroke="#fff" stroke-width="0.8"/>
<circle cx="781.3" cy="254.4" r="3.9" fill="#E39C9B" stroke="#fff" stroke-width="0.8"/>
<circle cx="740.8" cy="253.0" r="3.9" fill="#E39C9B" stroke="#fff" stroke-width="0.8"/>
<circle cx="743.4" cy="245.7" r="3.9" fill="#E39C9B" stroke="#fff" stroke-width="0.8"/>
<circle cx="839.0" cy="246.0" r="3.9" fill="#E39C9B" stroke="#fff" stroke-width="0.8"/>
<circle cx="758.8" cy="262.6" r="3.9" fill="#E39C9B" stroke="#fff" stroke-width="0.8"/>
<circle cx="703.5" cy="258.3" r="3.9" fill="#E39C9B" stroke="#fff" stroke-width="0.8"/>
<circle cx="740.1" cy="260.3" r="3.9" fill="#E39C9B" stroke="#fff" stroke-width="0.8"/>
<circle cx="712.5" cy="241.2" r="3.9" fill="#E39C9B" stroke="#fff" stroke-width="0.8"/>
<circle cx="691.5" cy="247.8" r="3.9" fill="#E39C9B" stroke="#fff" stroke-width="0.8"/>
<circle cx="710.3" cy="262.2" r="3.9" fill="#E39C9B" stroke="#fff" stroke-width="0.8"/>
<circle cx="770.6" cy="247.4" r="3.9" fill="#E39C9B" stroke="#fff" stroke-width="0.8"/>
<circle cx="836.7" cy="256.7" r="3.9" fill="#E39C9B" stroke="#fff" stroke-width="0.8"/>
<circle cx="819.2" cy="261.1" r="3.9" fill="#E39C9B" stroke="#fff" stroke-width="0.8"/>
<circle cx="743.7" cy="265.5" r="3.9" fill="#E39C9B" stroke="#fff" stroke-width="0.8"/>
<circle cx="713.4" cy="257.1" r="3.9" fill="#E39C9B" stroke="#fff" stroke-width="0.8"/>
<circle cx="806.4" cy="270.1" r="3.9" fill="#E39C9B" stroke="#fff" stroke-width="0.8"/>
<circle cx="738.1" cy="255.8" r="3.9" fill="#E39C9B" stroke="#fff" stroke-width="0.8"/>
<circle cx="837.7" cy="241.8" r="3.9" fill="#E39C9B" stroke="#fff" stroke-width="0.8"/>
<circle cx="817.6" cy="252.7" r="3.9" fill="#E39C9B" stroke="#fff" stroke-width="0.8"/>
<circle cx="800.5" cy="274.9" r="3.9" fill="#E39C9B" stroke="#fff" stroke-width="0.8"/>
<circle cx="722.5" cy="267.4" r="3.9" fill="#E39C9B" stroke="#fff" stroke-width="0.8"/>
<circle cx="692.4" cy="259.6" r="3.9" fill="#E39C9B" stroke="#fff" stroke-width="0.8"/>
<circle cx="692.2" cy="260.0" r="3.9" fill="#E39C9B" stroke="#fff" stroke-width="0.8"/>
<circle cx="793.3" cy="251.6" r="3.9" fill="#E39C9B" stroke="#fff" stroke-width="0.8"/>
<circle cx="833.4" cy="279.5" r="3.9" fill="#E39C9B" stroke="#fff" stroke-width="0.8"/>
<circle cx="838.2" cy="251.5" r="3.9" fill="#E39C9B" stroke="#fff" stroke-width="0.8"/>
<circle cx="833.2" cy="263.0" r="3.9" fill="#E39C9B" stroke="#fff" stroke-width="0.8"/>
<circle cx="722.5" cy="253.7" r="3.9" fill="#E39C9B" stroke="#fff" stroke-width="0.8"/>
<circle cx="717.9" cy="255.0" r="3.9" fill="#E39C9B" stroke="#fff" stroke-width="0.8"/>
<circle cx="824.8" cy="246.1" r="3.9" fill="#E39C9B" stroke="#fff" stroke-width="0.8"/>
<circle cx="815.7" cy="272.2" r="3.9" fill="#E39C9B" stroke="#fff" stroke-width="0.8"/>
<circle cx="809.5" cy="256.9" r="3.9" fill="#E39C9B" stroke="#fff" stroke-width="0.8"/>
<circle cx="700.9" cy="269.6" r="3.9" fill="#E39C9B" stroke="#fff" stroke-width="0.8"/>
<circle cx="806.9" cy="276.0" r="3.9" fill="#E39C9B" stroke="#fff" stroke-width="0.8"/>
<circle cx="802.0" cy="264.5" r="3.9" fill="#E39C9B" stroke="#fff" stroke-width="0.8"/>
<circle cx="807.9" cy="257.9" r="3.9" fill="#E39C9B" stroke="#fff" stroke-width="0.8"/>
<circle cx="738.5" cy="250.8" r="3.9" fill="#E39C9B" stroke="#fff" stroke-width="0.8"/>
<circle cx="748.2" cy="282.4" r="3.9" fill="#E39C9B" stroke="#fff" stroke-width="0.8"/>
<circle cx="749.0" cy="244.5" r="3.9" fill="#E39C9B" stroke="#fff" stroke-width="0.8"/>
<circle cx="713.8" cy="263.6" r="3.9" fill="#E39C9B" stroke="#fff" stroke-width="0.8"/>
<circle cx="707.3" cy="246.9" r="3.9" fill="#E39C9B" stroke="#fff" stroke-width="0.8"/>
<circle cx="810.6" cy="242.2" r="3.9" fill="#E39C9B" stroke="#fff" stroke-width="0.8"/>
<circle cx="710.2" cy="246.6" r="3.9" fill="#E39C9B" stroke="#fff" stroke-width="0.8"/>
<circle cx="787.9" cy="281.9" r="3.9" fill="#E39C9B" stroke="#fff" stroke-width="0.8"/>
<circle cx="741.3" cy="263.4" r="3.9" fill="#E39C9B" stroke="#fff" stroke-width="0.8"/>
<circle cx="690.2" cy="260.2" r="3.9" fill="#E39C9B" stroke="#fff" stroke-width="0.8"/>
<circle cx="835.6" cy="265.4" r="3.9" fill="#E39C9B" stroke="#fff" stroke-width="0.8"/>
<circle cx="829.9" cy="267.9" r="3.9" fill="#E39C9B" stroke="#fff" stroke-width="0.8"/>
<circle cx="753.9" cy="246.6" r="3.9" fill="#E39C9B" stroke="#fff" stroke-width="0.8"/>
<circle cx="720.1" cy="271.3" r="3.9" fill="#E39C9B" stroke="#fff" stroke-width="0.8"/>
<circle cx="726.3" cy="260.5" r="3.9" fill="#E39C9B" stroke="#fff" stroke-width="0.8"/>
<circle cx="777.1" cy="252.0" r="3.9" fill="#E39C9B" stroke="#fff" stroke-width="0.8"/>
<circle cx="686.0" cy="392.2" r="3.9" fill="#E39C9B" stroke="#fff" stroke-width="0.8"/>
<circle cx="696.1" cy="392.2" r="3.9" fill="#E39C9B" stroke="#fff" stroke-width="0.8"/>
<circle cx="697.2" cy="392.2" r="3.9" fill="#E39C9B" stroke="#fff" stroke-width="0.8"/>
<circle cx="705.3" cy="392.2" r="3.9" fill="#E39C9B" stroke="#fff" stroke-width="0.8"/>
<circle cx="709.1" cy="392.2" r="3.9" fill="#E39C9B" stroke="#fff" stroke-width="0.8"/>
<circle cx="710.9" cy="392.2" r="3.9" fill="#E39C9B" stroke="#fff" stroke-width="0.8"/>
<circle cx="718.3" cy="392.2" r="3.9" fill="#E39C9B" stroke="#fff" stroke-width="0.8"/>
<circle cx="723.9" cy="392.2" r="3.9" fill="#E39C9B" stroke="#fff" stroke-width="0.8"/>
<circle cx="728.3" cy="392.2" r="3.9" fill="#E39C9B" stroke="#fff" stroke-width="0.8"/>
<circle cx="738.7" cy="392.2" r="3.9" fill="#E39C9B" stroke="#fff" stroke-width="0.8"/>
<circle cx="741.7" cy="392.2" r="3.9" fill="#E39C9B" stroke="#fff" stroke-width="0.8"/>
<circle cx="748.0" cy="392.2" r="3.9" fill="#E39C9B" stroke="#fff" stroke-width="0.8"/>
<circle cx="759.1" cy="392.2" r="3.9" fill="#E39C9B" stroke="#fff" stroke-width="0.8"/>
<circle cx="771.4" cy="392.2" r="3.9" fill="#E39C9B" stroke="#fff" stroke-width="0.8"/>
<circle cx="777.7" cy="392.2" r="3.9" fill="#E39C9B" stroke="#fff" stroke-width="0.8"/>
<circle cx="788.8" cy="392.2" r="3.9" fill="#E39C9B" stroke="#fff" stroke-width="0.8"/>
<circle cx="792.5" cy="392.2" r="3.9" fill="#E39C9B" stroke="#fff" stroke-width="0.8"/>
<circle cx="796.3" cy="392.2" r="3.9" fill="#E39C9B" stroke="#fff" stroke-width="0.8"/>
<circle cx="801.8" cy="392.2" r="3.9" fill="#E39C9B" stroke="#fff" stroke-width="0.8"/>
<circle cx="803.7" cy="392.2" r="3.9" fill="#E39C9B" stroke="#fff" stroke-width="0.8"/>
<circle cx="812.2" cy="392.2" r="3.9" fill="#E39C9B" stroke="#fff" stroke-width="0.8"/>
<circle cx="820.4" cy="392.2" r="3.9" fill="#E39C9B" stroke="#fff" stroke-width="0.8"/>
<circle cx="825.9" cy="392.2" r="3.9" fill="#E39C9B" stroke="#fff" stroke-width="0.8"/>
<circle cx="831.5" cy="392.2" r="3.9" fill="#E39C9B" stroke="#fff" stroke-width="0.8"/>
<circle cx="848.2" cy="392.2" r="3.9" fill="#E39C9B" stroke="#fff" stroke-width="0.8"/>
<circle cx="868.6" cy="392.2" r="3.9" fill="#E39C9B" stroke="#fff" stroke-width="0.8"/>
<circle cx="872.3" cy="392.2" r="3.9" fill="#E39C9B" stroke="#fff" stroke-width="0.8"/>
<circle cx="879.7" cy="392.2" r="3.9" fill="#E39C9B" stroke="#fff" stroke-width="0.8"/>
<circle cx="886.4" cy="392.2" r="3.9" fill="#E39C9B" stroke="#fff" stroke-width="0.8"/>
<circle cx="896.4" cy="392.2" r="3.9" fill="#E39C9B" stroke="#fff" stroke-width="0.8"/>
<circle cx="900.1" cy="392.2" r="3.9" fill="#E39C9B" stroke="#fff" stroke-width="0.8"/>
<circle cx="921.3" cy="392.2" r="3.9" fill="#E39C9B" stroke="#fff" stroke-width="0.8"/>
<circle cx="929.8" cy="392.2" r="3.9" fill="#E39C9B" stroke="#fff" stroke-width="0.8"/>
<circle cx="800.7" cy="325.4" r="3.9" fill="#E39C9B" stroke="#fff" stroke-width="0.8"/>
<circle cx="824.5" cy="325.4" r="3.9" fill="#E39C9B" stroke="#fff" stroke-width="0.8"/>
<circle cx="882.3" cy="325.4" r="3.9" fill="#E39C9B" stroke="#fff" stroke-width="0.8"/>
<circle cx="918.7" cy="325.4" r="3.9" fill="#E39C9B" stroke="#fff" stroke-width="0.8"/>
<path d="M837.20 521.40 A103 103 0 0 1 864.55 525.10 L853.40 565.59 A61 61 0 0 0 837.20 563.40Z" fill="#A1C07E" stroke="#fff" stroke-width="1.5" stroke-linejoin="round"/>
<path d="M864.55 525.10 A103 103 0 0 1 910.29 551.82 L880.48 581.42 A61 61 0 0 0 853.40 565.59Z" fill="#A78BC6" stroke="#fff" stroke-width="1.5" stroke-linejoin="round"/>
<path d="M910.29 551.82 A103 103 0 0 1 933.16 586.99 L894.03 602.24 A61 61 0 0 0 880.48 581.42Z" fill="#E38E8C" stroke="#fff" stroke-width="1.5" stroke-linejoin="round"/>
<path d="M933.16 586.99 A103 103 0 0 1 746.94 674.02 L783.75 653.79 A61 61 0 0 0 894.03 602.24Z" fill="#F2D370" stroke="#fff" stroke-width="1.5" stroke-linejoin="round"/>
<path d="M746.94 674.02 A103 103 0 0 1 837.20 521.40 L837.20 563.40 A61 61 0 0 0 783.75 653.79Z" fill="#629CDE" stroke="#fff" stroke-width="1.5" stroke-linejoin="round"/>
<path d="M253.7 553.8 L239.0 549.4 L231.7 552.4 L228.8 556.0 L230.3 558.9 L227.3 563.3 L229.5 566.3 L228.8 570.7 L230.3 575.1 L234.6 579.4 L232.5 583.8 L240.5 578.0 L245.6 573.6 L253.7 575.1Z" fill="#C9C9C9"/>
<path d="M253.7 553.8 L265.8 551.9 L272.9 553.7 L278.1 556.3 L279.0 558.1 L285.2 556.7 L292.2 558.5 L297.5 558.1 L301.4 554.6 L305.2 558.4 L306.8 559.1 L309.1 554.6 L311.3 556.9 L309.8 561.4 L306.8 563.0 L301.4 570.6 L298.4 575.9 L301.4 580.5 L309.8 584.3 L312.1 590.4 L315.2 589.6 L314.4 585.1 L316.3 582.0 L315.2 577.4 L315.9 571.3 L319.0 570.6 L323.5 575.2 L325.8 578.2 L328.9 576.7 L331.2 582.0 L336.5 588.1 L335.0 591.2 L328.1 594.2 L322.0 598.0 L316.7 601.8 L311.3 604.1 L309.8 595.7 L305.2 595.4 L297.6 594.6 L290.0 595.0 L271.3 594.1 L266.9 588.2 L262.5 580.9 L253.7 575.1Z" fill="#89B5E8"/>
<path d="M273.4 542.0 L278.9 540.9 L287.7 539.8 L289.9 543.1 L291.0 550.7 L293.2 554.0 L285.5 556.2 L278.9 555.1 L274.5 548.5Z" fill="#89B5E8"/>
<path d="M268.6 536.7 L275.2 536.7 L277.4 541.1 L273.0 546.6 L270.8 548.8 L268.1 544.4Z" fill="#89B5E8"/>
<path d="M275.0 531.3 L280.5 529.1 L289.3 531.3 L288.2 535.7 L280.5 536.8 L276.1 534.6Z" fill="#89B5E8"/>
<path d="M271.4 530.2 L275.8 525.8 L276.9 528.0 L272.5 531.8Z" fill="#89B5E8"/>
<path d="M280.9 523.2 L283.7 523.2 L282.6 525.1Z" fill="#89B5E8"/>
<path d="M304.3 522.1 L316.4 522.1 L315.3 529.8 L303.2 529.8Z" fill="#89B5E8"/>
<path d="M296.7 527.1 L302.2 528.2 L304.4 533.7 L315.4 533.7 L313.2 538.1 L302.2 537.0 L298.9 530.4Z" fill="#89B5E8"/>
<path d="M291.7 528.4 L296.1 528.9 L295.6 535.0 L292.8 535.0Z" fill="#89B5E8"/>
<path d="M292.6 539.7 L295.9 539.7 L297.0 546.3 L294.8 547.4 L293.2 545.2Z" fill="#89B5E8"/>
<path d="M297.8 539.2 L302.2 539.2 L301.1 544.7Z" fill="#89B5E8"/>
<path d="M296.4 545.8 L300.8 546.9 L304.1 553.5 L307.4 561.2 L303.0 562.3 L298.6 556.8Z" fill="#89B5E8"/>
<path d="M307.6 552.8 L312.0 552.8 L310.9 560.5 L307.6 561.6Z" fill="#89B5E8"/>
<path d="M306.5 562.4 L312.0 567.9 L309.8 571.2Z" fill="#89B5E8"/>
<path d="M304.5 541.4 L311.5 540.5 L315.9 543.1 L320.3 548.4 L325.6 551.9 L324.7 557.2 L331.0 560.7 L328.9 563.7 L327.4 565.2 L328.1 569.1 L325.1 569.8 L322.0 566.8 L319.7 561.4 L316.7 559.1 L313.0 555.0 L308.0 549.0 L304.5 545.0Z" fill="#89B5E8"/>
<path d="M334.2 592.7 L337.3 591.2 L339.2 595.7 L335.7 596.7Z" fill="#89B5E8"/>
<path d="M325.1 595.0 L328.1 595.7 L329.6 598.8 L327.4 601.8Z" fill="#89B5E8"/>
<path d="M270.0 593.8 L299.0 594.6 L305.8 596.1 L309.7 598.4 L311.2 603.7 L315.0 599.9 L319.6 598.4 L324.9 596.9 L325.7 599.2 L322.6 603.0 L318.0 607.5 L316.5 612.1 L311.9 616.7 L311.2 619.0 L312.7 623.6 L311.2 622.0 L309.7 619.0 L305.1 618.2 L300.5 619.7 L296.3 622.8 L295.9 626.6 L298.2 631.2 L300.5 631.9 L303.6 629.7 L305.1 628.9 L305.8 632.7 L303.6 634.2 L308.1 637.3 L309.7 640.3 L313.5 643.4 L315.8 644.9 L312.7 644.1 L308.9 641.1 L302.0 635.8 L296.7 633.5 L291.4 630.4 L288.3 628.1 L286.8 624.3 L282.2 619.0 L278.4 615.9 L274.6 612.9 L270.0 608.3Z" fill="#C9C9C9"/>
<path d="M228.8 550.2 L228.8 558.9 L234.6 566.3 L228.8 550.2Z" fill="#C9C9C9"/>
<path d="M277.6 615.9 L279.9 620.5 L283.0 625.8 L281.4 624.3 L278.4 619.0Z" fill="#C9C9C9"/>
<path d="M309.7 626.6 L317.3 629.3 L323.4 631.2 L321.9 631.9 L315.8 630.4Z" fill="#C9C9C9"/>
<path d="M320.3 631.2 L324.9 631.6 L323.4 632.7Z" fill="#C9C9C9"/>
<path d="M322.4 523.3 L371.9 523.3 L373.2 526.4 L371.9 532.8 L370.7 540.4 L367.5 544.2 L369.4 549.3 L365.6 553.1 L359.2 555.7 L355.4 560.8 L351.6 565.8 L349.1 574.1 L346.5 572.2 L342.7 565.8 L339.5 558.2 L340.2 553.1 L338.9 548.0 L337.6 540.4 L335.1 532.8 L330.0 529.0 L326.2 525.2Z" fill="#C9C9C9"/>
<path d="M368.8 563.0 L377.7 563.3 L376.4 567.1 L371.9 567.4 L369.4 565.8Z" fill="#C9C9C9"/>
<path d="M406.3 523.3 L410.3 523.6 L408.8 527.7Z" fill="#C9C9C9"/>
<path d="M312.6 654.0 L317.1 649.4 L314.9 648.3 L318.9 640.3 L321.7 639.1 L329.7 640.3 L334.3 643.7 L340.0 648.3 L343.4 651.7 L349.1 652.9 L357.1 657.4 L353.7 666.6 L345.7 673.4 L340.0 678.0 L337.7 683.7 L335.4 687.1 L328.6 692.9 L327.4 699.7 L324.0 707.7 L324.6 713.4 L320.6 710.0 L319.4 702.0 L320.6 689.4 L322.9 675.7 L324.0 666.6 L320.6 664.3 L314.9 659.7 L312.6 656.3Z" fill="#C9C9C9"/>
<path d="M316.6 641.4 L320.0 639.1 L324.6 644.9 L324.0 650.0 L321.7 652.3 L316.0 649.4 L315.4 644.9Z" fill="#89B5E8"/>
<path d="M326.3 672.9 L330.9 673.4 L334.9 675.7 L336.6 680.3 L334.3 683.7 L334.9 690.6 L329.7 692.9 L327.4 698.6 L325.1 705.4 L322.9 710.0 L320.0 707.7 L322.3 700.9 L323.4 689.4 L324.6 678.0Z" fill="#89B5E8"/>
<path d="M440.0 557.0 L447.6 555.7 L452.7 553.1 L459.1 554.4 L464.2 559.5 L462.9 549.3 L465.4 545.5 L473.0 541.7 L478.1 537.9 L482.0 532.8 L493.4 525.2 L501.0 529.0 L503.0 531.2 L501.0 538.3 L509.1 541.3 L517.3 541.3 L521.3 549.5 L523.4 547.4 L531.5 544.4 L540.7 547.4 L544.7 549.5 L549.8 550.5 L550.8 552.5 L561.0 554.6 L562.0 552.5 L570.1 554.6 L569.1 565.7 L570.1 569.8 L561.0 573.9 L554.9 572.8 L552.8 576.9 L550.8 583.0 L547.8 590.1 L545.7 585.0 L547.8 577.9 L550.8 573.9 L542.7 574.9 L536.6 575.9 L530.5 578.9 L526.4 585.0 L529.5 587.1 L531.5 591.1 L525.7 597.7 L523.4 601.1 L517.7 604.6 L509.7 608.0 L512.0 612.6 L512.4 619.6 L510.1 624.2 L505.5 626.4 L501.7 628.0 L497.9 627.2 L496.4 627.2 L498.6 630.3 L499.4 636.4 L497.9 640.2 L494.8 639.4 L493.3 634.8 L491.8 634.1 L490.3 637.1 L489.5 640.2 L492.5 645.5 L494.1 648.6 L491.8 647.0 L488.7 642.5 L488.0 634.1 L484.9 632.5 L484.2 628.7 L481.9 625.7 L475.0 622.1 L469.9 617.5 L468.4 613.0 L465.3 617.5 L463.0 622.9 L460.7 624.4 L453.1 623.6 L450.1 626.7 L447.0 631.3 L440.9 633.5 L435.6 636.6 L432.5 632.0 L427.2 622.9 L426.4 621.3 L427.2 617.5 L434.1 610.7 L428.2 612.9 L434.1 610.5 L424.3 611.0 L419.4 610.0 L418.9 606.1 L418.4 604.6 L415.5 606.1 L414.5 609.5 L413.1 609.0 L411.1 604.2 L406.7 598.8 L402.3 599.5 L399.9 600.5 L395.0 601.2 L394.6 603.7 L395.5 607.3 L392.8 610.8 L388.3 612.6 L384.8 609.0 L383.9 602.8 L390.1 602.8 L392.8 600.1 L391.0 596.6 L388.3 594.8 L392.8 591.3 L396.3 589.5 L398.1 587.7 L400.8 584.1 L401.7 581.5 L403.5 583.2 L404.4 586.8 L407.0 585.9 L413.2 584.1 L414.1 580.6 L416.8 576.1 L419.5 575.2 L423.0 571.7 L424.8 562.8 L424.8 556.6 L431.9 558.3 L437.3 555.7 L445.0 553.9Z" fill="#C9C9C9"/>
<path d="M424.8 556.6 L445.0 553.9 L445.0 598.4 L426.1 603.7Z" fill="#C9C9C9"/>
<path d="M445.0 590.0 L445.0 604.6 L419.4 604.6 L409.6 599.8 L402.3 598.8 L395.0 590.0Z" fill="#C9C9C9"/>
<path d="M445.0 553.9 L445.0 598.4 L404.4 594.8 L398.1 587.7 L413.2 584.1 L423.0 571.7 L424.8 556.6Z" fill="#C9C9C9"/>
<path d="M427.2 617.5 L434.1 610.7 L445.5 609.1 L460.7 621.3 L450.1 626.7 L435.6 636.6Z" fill="#C9C9C9"/>
<path d="M475.0 615.0 L512.4 619.6 L497.9 627.2 L481.9 625.7Z" fill="#C9C9C9"/>
<path d="M398.1 577.0 L398.6 571.7 L401.7 567.2 L406.1 561.0 L409.7 555.7 L414.1 551.2 L418.6 549.0 L422.1 550.3 L421.3 553.9 L417.7 556.6 L415.9 559.2 L414.1 563.7 L412.4 568.1 L410.6 571.7 L409.7 576.1 L407.9 582.4 L405.7 582.8 L403.5 580.6 L400.8 579.7Z" fill="#C9C9C9"/>
<path d="M415.9 575.2 L414.1 571.7 L415.0 566.3 L416.8 559.2 L419.5 554.8 L421.3 550.3 L424.8 553.9 L424.8 562.8 L423.0 571.7 L419.5 575.2Z" fill="#C9C9C9"/>
<path d="M425.7 561.9 L431.9 562.3 L430.6 566.3 L426.6 565.6Z" fill="#FFFFFF"/>
<path d="M419.9 599.8 L425.3 598.8 L432.1 601.2 L430.2 604.2 L424.3 605.1 L419.4 604.6Z" fill="#FFFFFF"/>
<path d="M439.4 600.0 L443.2 602.3 L445.5 607.6 L444.0 610.7 L440.9 607.6Z" fill="#FFFFFF"/>
<path d="M439.4 619.1 L441.7 618.3 L447.0 624.4 L444.0 625.5Z" fill="#FFFFFF"/>
<path d="M418.9 606.1 L426.7 605.1 L435.0 606.1 L434.1 610.5 L424.3 611.0 L419.4 610.0Z" fill="#C9C9C9"/>
<path d="M401.8 599.3 L404.3 600.3 L406.7 603.2 L409.2 605.6 L410.1 608.1 L408.7 609.5 L407.2 608.1 L404.8 604.6 L402.3 602.2 L400.9 600.7Z" fill="#C9C9C9"/>
<path d="M399.9 603.7 L401.7 603.7 L401.7 607.3 L399.9 607.3Z" fill="#C9C9C9"/>
<path d="M387.5 578.8 L391.0 584.1 L392.8 590.4 L388.3 591.3 L385.7 587.7 L387.5 584.1Z" fill="#C9C9C9"/>
<path d="M383.0 585.0 L385.7 585.9 L384.8 589.5 L382.6 588.6Z" fill="#C9C9C9"/>
<path d="M459.1 527.7 L450.2 534.1 L445.1 546.8 L447.6 549.3 L452.7 536.6 L459.1 529.0Z" fill="#C9C9C9"/>
<path d="M528.5 532.2 L534.6 531.7 L539.6 535.2 L533.5 535.2Z" fill="#C9C9C9"/>
<path d="M532.6 589.7 L534.9 602.3 L531.4 608.0 L525.7 612.6 L521.1 614.9 L523.4 612.0 L530.3 605.7 L532.0 597.7Z" fill="#C9C9C9"/>
<path d="M553.1 571.4 L550.9 580.6 L547.4 589.7 L546.3 582.9 L549.7 576.0Z" fill="#C9C9C9"/>
<path d="M517.7 605.7 L520.0 610.3 L518.9 613.7 L516.6 609.1Z" fill="#C9C9C9"/>
<path d="M510.8 625.7 L512.4 625.7 L512.0 627.6Z" fill="#C9C9C9"/>
<path d="M510.8 631.8 L513.1 634.8 L512.7 637.9 L511.2 635.6Z" fill="#C9C9C9"/>
<path d="M513.9 640.2 L516.9 641.7 L515.4 644.0 L513.5 642.5Z" fill="#C9C9C9"/>
<path d="M471.0 641.9 L472.9 643.5 L471.8 644.6Z" fill="#C9C9C9"/>
<path d="M376.1 627.3 L377.6 622.7 L382.2 618.1 L388.3 612.0 L394.4 610.5 L400.5 612.0 L406.6 616.6 L415.7 616.6 L426.4 618.1 L427.9 622.7 L435.6 634.9 L440.1 641.0 L441.7 644.0 L434.0 648.6 L431.0 656.2 L431.0 665.4 L423.4 673.0 L418.8 680.6 L411.2 686.7 L406.6 679.1 L404.3 666.9 L406.6 656.2 L400.5 650.1 L395.9 644.0 L388.3 644.0 L379.1 641.0 L376.1 633.4Z" fill="#C9C9C9"/>
<path d="M426.4 621.3 L427.6 620.6 L435.2 635.8 L434.1 637.4Z" fill="#FFFFFF"/>
<path d="M440.9 663.1 L437.9 675.3 L435.6 673.0 L438.6 665.4Z" fill="#C9C9C9"/>
<path d="M505.6 672.1 L513.2 669.0 L517.8 663.7 L525.4 662.2 L531.5 665.2 L533.0 661.4 L537.6 669.0 L543.7 679.7 L540.6 687.3 L536.1 690.4 L530.0 687.3 L524.6 682.8 L516.2 684.3 L508.6 685.8 L505.6 682.8Z" fill="#C9C9C9"/>
<path d="M535.3 695.0 L538.8 695.3 L537.6 697.7Z" fill="#C9C9C9"/>
<path d="M557.4 698.8 L560.5 696.5 L560.5 702.6 L556.7 702.6Z" fill="#C9C9C9"/>
<path d="M531.4 653.1 L535.2 654.7 L539.1 660.0 L534.5 658.5 L531.4 658.5Z" fill="#C9C9C9"/>
<path d="M504.0 645.5 L507.8 644.4 L508.6 647.8 L505.5 647.8Z" fill="#C9C9C9"/>
<path d="M486.4 645.1 L490.3 647.8 L494.1 651.6 L496.4 654.7 L495.2 655.4 L490.3 650.8Z" fill="#6A9FDE"/>
<path d="M497.1 656.2 L504.0 657.7 L503.2 658.8 L497.9 657.7Z" fill="#6A9FDE"/>
<path d="M500.2 649.3 L505.5 647.0 L508.6 647.8 L507.8 653.1 L504.0 653.9 L500.9 651.6Z" fill="#6A9FDE"/>
<path d="M510.1 651.6 L512.4 651.6 L513.1 654.7 L510.8 655.4Z" fill="#6A9FDE"/>
<path d="M522.3 651.2 L528.4 651.6 L531.4 653.9 L531.0 658.5 L527.6 656.2 L524.6 653.9Z" fill="#6A9FDE"/>
<path d="M468.4 613.0 L469.9 617.5 L472.9 619.8 L478.9 624.4 L478.3 626.7 L472.9 632.0 L471.4 636.6 L469.1 641.2 L464.6 632.8 L462.3 627.4 L460.7 624.4 L463.0 622.9 L465.3 617.5Z" fill="#6A9FDE"/>
<path d="M481.9 620.3 L487.2 620.3 L485.7 624.2 L483.4 626.4 L481.9 623.4Z" fill="#6A9FDE"/>
<path d="M491.8 628.0 L494.8 628.3 L494.4 631.4 L492.2 631.8Z" fill="#B9D3F1"/>
<path d="M496.4 633.3 L497.9 633.7 L497.9 635.6 L496.5 635.4Z" fill="#B9D3F1"/>
<path d="M480.0 594.4 L484.5 591.9 L490.8 590.6 L494.7 592.5 L503.6 594.4 L509.9 597.0 L503.6 600.2 L494.7 604.6 L488.3 602.7 L483.2 598.9Z" fill="#6A9FDE"/>
<path d="M399.9 586.8 L405.2 585.9 L407.0 590.4 L406.1 595.7 L401.7 596.6 L399.0 593.0Z" fill="#DCE8F7"/>
<path d="M418.6 595.7 L420.8 595.7 L421.3 598.4 L419.0 598.4Z" fill="#B9D3F1"/>
<path d="M411.0 604.6 L412.8 604.6 L412.8 607.3 L411.0 607.3Z" fill="#B9D3F1"/>
<path d="M383.4 616.9 L388.0 612.8 L390.1 615.4 L384.9 619.3Z" fill="#6A9FDE"/>
<path d="M375.8 627.6 L378.8 622.7 L383.4 618.9 L378.8 626.1Z" fill="#6A9FDE"/>
<path d="M400.5 611.3 L402.9 616.3 L401.4 617.5Z" fill="#6A9FDE"/>
<path d="M394.4 636.7 L400.5 628.8 L406.9 627.3 L407.5 635.2 L402.0 636.7Z" fill="#B5D0F0"/>
<path d="M415.0 629.0 L428.7 628.2 L429.1 633.5 L427.2 635.8 L424.1 639.6 L415.0 639.6Z" fill="#89B5E8"/>
<path d="M401.7 650.4 L406.0 649.2 L405.1 652.9Z" fill="#B5D0F0"/>
<path d="M437.5 605.0 L440.9 605.0 L440.9 607.6 L437.9 607.6Z" fill="#2F6DC2"/>
<path d="M388.3 644.0 L389.8 630.3 L400.5 625.7 L415.7 624.2 L426.4 625.7" fill="none" stroke="#fff" stroke-width="0.45" stroke-opacity="0.55"/>
<path d="M400.5 650.1 L409.6 644.0 L420.3 644.0 L434.0 648.6" fill="none" stroke="#fff" stroke-width="0.45" stroke-opacity="0.55"/>
<path d="M406.6 656.2 L420.3 659.3 L431.0 659.3" fill="none" stroke="#fff" stroke-width="0.45" stroke-opacity="0.55"/>
<path d="M404.3 666.9 L415.7 665.4 L427.9 668.4" fill="none" stroke="#fff" stroke-width="0.45" stroke-opacity="0.55"/>
<path d="M408.1 674.5 L418.8 671.5 L424.9 674.5" fill="none" stroke="#fff" stroke-width="0.45" stroke-opacity="0.55"/>
<path d="M394.4 610.5 L395.9 625.7 L388.3 630.3" fill="none" stroke="#fff" stroke-width="0.45" stroke-opacity="0.55"/>
<path d="M415.7 616.6 L415.7 628.8" fill="none" stroke="#fff" stroke-width="0.45" stroke-opacity="0.55"/>
<path d="M409.6 644.0 L411.2 665.4 L409.6 679.1" fill="none" stroke="#fff" stroke-width="0.45" stroke-opacity="0.55"/>
<path d="M420.3 644.0 L421.8 662.3 L418.8 677.6" fill="none" stroke="#fff" stroke-width="0.45" stroke-opacity="0.55"/>
<path d="M415.9 578.8 L423.0 585.9 L428.4 594.8 L431.9 598.4" fill="none" stroke="#fff" stroke-width="0.45" stroke-opacity="0.55"/>
<path d="M407.0 585.0 L414.1 587.7 L421.3 587.7 L424.8 594.8" fill="none" stroke="#fff" stroke-width="0.45" stroke-opacity="0.55"/>
<path d="M407.0 594.8 L414.1 594.8 L419.5 600.1" fill="none" stroke="#fff" stroke-width="0.45" stroke-opacity="0.55"/>
<path d="M395.5 594.8 L401.7 598.4 L407.0 600.1" fill="none" stroke="#fff" stroke-width="0.45" stroke-opacity="0.55"/>
<path d="M437.9 609.1 L447.0 612.2 L453.1 613.7 L460.7 621.3" fill="none" stroke="#fff" stroke-width="0.45" stroke-opacity="0.55"/>
<path d="M447.8 609.9 L453.1 618.3 L454.6 623.6" fill="none" stroke="#fff" stroke-width="0.45" stroke-opacity="0.55"/>
<path d="M480.0 594.3 L491.4 589.7 L502.9 588.6 L512.0 587.4 L520.0 586.3" fill="none" stroke="#fff" stroke-width="0.45" stroke-opacity="0.55"/>
<path d="M440.0 602.7 L452.7 586.2 L465.4 588.7 L478.1 592.5" fill="none" stroke="#fff" stroke-width="0.45" stroke-opacity="0.55"/>
<path d="M320.0 654.6 L329.7 660.9 L334.3 667.7 L338.9 675.7" fill="none" stroke="#fff" stroke-width="0.45" stroke-opacity="0.55"/>
<path d="M324.0 666.6 L329.7 660.9 L326.3 642.6 L334.3 647.1" fill="none" stroke="#fff" stroke-width="0.45" stroke-opacity="0.55"/>
</svg>
<svg class="abs" style="left:0;top:0" width="1024" height="787" font-family="Liberation Sans, sans-serif">
<text x="54.5" y="199.8" font-size="12.6" fill="#4C5773" font-weight="700" text-anchor="start" dominant-baseline="central" letter-spacing="-0.1" >Orders by Product Line</text>
<circle cx="64.6" cy="223" r="6.7" fill="#5C9BE0"/>
<text x="80" y="223.5" font-size="13.3" fill="#4C5773" font-weight="700" text-anchor="start" dominant-baseline="central" letter-spacing="-0.5" >Electronics</text>
<circle cx="165" cy="223" r="6.7" fill="#8CBE55"/>
<text x="180.2" y="223.5" font-size="13.3" fill="#4C5773" font-weight="700" text-anchor="start" dominant-baseline="central" letter-spacing="-0.27" >Home and Office</text>
<circle cx="301" cy="223" r="6.7" fill="#A78BC7"/>
<text x="316.8" y="223.5" font-size="13.3" fill="#4C5773" font-weight="700" text-anchor="start" dominant-baseline="central" letter-spacing="-0.5" >Kitchen</text>
<circle cx="382.6" cy="223" r="6.7" fill="#F3CF66"/>
<text x="397.2" y="223.5" font-size="13.3" fill="#4C5773" font-weight="700" text-anchor="start" dominant-baseline="central" letter-spacing="-0.45" >Industrial</text>
<text x="91.5" y="392.2" font-size="12.5" fill="#949AAB" font-weight="700" text-anchor="end" dominant-baseline="central" letter-spacing="0" >0</text>
<text x="91.5" y="375.4" font-size="12.5" fill="#949AAB" font-weight="700" text-anchor="end" dominant-baseline="central" letter-spacing="0" >20</text>
<text x="91.5" y="358.59999999999997" font-size="12.5" fill="#949AAB" font-weight="700" text-anchor="end" dominant-baseline="central" letter-spacing="0" >40</text>
<text x="91.5" y="341.79999999999995" font-size="12.5" fill="#949AAB" font-weight="700" text-anchor="end" dominant-baseline="central" letter-spacing="0" >60</text>
<text x="91.5" y="325.0" font-size="12.5" fill="#949AAB" font-weight="700" text-anchor="end" dominant-baseline="central" letter-spacing="0" >80</text>
<text x="91.5" y="308.2" font-size="12.5" fill="#949AAB" font-weight="700" text-anchor="end" dominant-baseline="central" letter-spacing="0" >100</text>
<text x="91.5" y="291.4" font-size="12.5" fill="#949AAB" font-weight="700" text-anchor="end" dominant-baseline="central" letter-spacing="0" >120</text>
<text x="91.5" y="274.59999999999997" font-size="12.5" fill="#949AAB" font-weight="700" text-anchor="end" dominant-baseline="central" letter-spacing="0" >140</text>
<text x="91.5" y="257.79999999999995" font-size="12.5" fill="#949AAB" font-weight="700" text-anchor="end" dominant-baseline="central" letter-spacing="0" >160</text>
<text x="0" y="0" font-size="14" fill="#949AAB" font-weight="700" text-anchor="middle" dominant-baseline="central" letter-spacing="0" transform="translate(56 322) rotate(-90)">Count</text>
<text x="594.5" y="406.8" font-size="11.7" fill="#949AAB" font-weight="700" text-anchor="end" dominant-baseline="central" letter-spacing="0" >January, 2020</text>
<text x="347" y="430.5" font-size="14" fill="#949AAB" font-weight="700" text-anchor="middle" dominant-baseline="central" letter-spacing="0" >Created At</text>
<text x="639.3" y="199.8" font-size="12.6" fill="#4C5773" font-weight="700" text-anchor="start" dominant-baseline="central" letter-spacing="-0.1" >Price vs Rating</text>
<text x="662.5" y="392.7" font-size="12.5" fill="#949AAB" font-weight="700" text-anchor="end" dominant-baseline="central" letter-spacing="0" >0</text>
<text x="662.5" y="359.32" font-size="12.5" fill="#949AAB" font-weight="700" text-anchor="end" dominant-baseline="central" letter-spacing="0" >1</text>
<text x="662.5" y="325.94" font-size="12.5" fill="#949AAB" font-weight="700" text-anchor="end" dominant-baseline="central" letter-spacing="0" >2</text>
<text x="662.5" y="292.55999999999995" font-size="12.5" fill="#949AAB" font-weight="700" text-anchor="end" dominant-baseline="central" letter-spacing="0" >3</text>
<text x="662.5" y="259.17999999999995" font-size="12.5" fill="#949AAB" font-weight="700" text-anchor="end" dominant-baseline="central" letter-spacing="0" >4</text>
<text x="662.5" y="225.79999999999998" font-size="12.5" fill="#949AAB" font-weight="700" text-anchor="end" dominant-baseline="central" letter-spacing="0" >5</text>
<text x="0" y="0" font-size="13.7" fill="#949AAB" font-weight="700" text-anchor="middle" dominant-baseline="central" letter-spacing="0" transform="translate(641.2 309) rotate(-90)">Product Rating</text>
<text x="747.3" y="406" font-size="12.3" fill="#949AAB" font-weight="700" text-anchor="middle" dominant-baseline="central" letter-spacing="0" >$50.00</text>
<text x="857.5" y="406" font-size="12.3" fill="#949AAB" font-weight="700" text-anchor="middle" dominant-baseline="central" letter-spacing="0" >$100.00</text>
<text x="818.5" y="430.8" font-size="14" fill="#949AAB" font-weight="700" text-anchor="middle" dominant-baseline="central" letter-spacing="-0.15" >Subtotal</text>
<text x="54.2" y="477.3" font-size="12.6" fill="#4C5773" font-weight="700" text-anchor="start" dominant-baseline="central" letter-spacing="0" >Avg Revenue by Country (new territories)</text>
<circle cx="73.3" cy="581.4" r="6.6" fill="#DCE8F7"/>
<text x="88.8" y="582.0" font-size="16" fill="#4C5773" font-weight="700" text-anchor="start" dominant-baseline="central" letter-spacing="0.72" >6.5M - 7.0M</text>
<circle cx="73.3" cy="602.7" r="6.6" fill="#B9D3F1"/>
<text x="88.8" y="603.3" font-size="16" fill="#4C5773" font-weight="700" text-anchor="start" dominant-baseline="central" letter-spacing="0.72" >7.4M - 7.6M</text>
<circle cx="73.3" cy="624.0" r="6.6" fill="#8DB7E9"/>
<text x="88.8" y="624.6" font-size="16" fill="#4C5773" font-weight="700" text-anchor="start" dominant-baseline="central" letter-spacing="0.72" >7.6M - 7.8M</text>
<circle cx="73.3" cy="645.3" r="6.6" fill="#6A9FDE"/>
<text x="88.8" y="645.9" font-size="16" fill="#4C5773" font-weight="700" text-anchor="start" dominant-baseline="central" letter-spacing="0.72" >7.8M - 8.0M</text>
<circle cx="73.3" cy="666.6" r="6.6" fill="#3070C4"/>
<text x="88.8" y="667.2" font-size="16" fill="#4C5773" font-weight="700" text-anchor="start" dominant-baseline="central" letter-spacing="0.72" >8.2M +</text>
<text x="639.5" y="477.3" font-size="12.6" fill="#4C5773" font-weight="700" text-anchor="start" dominant-baseline="central" letter-spacing="-0.1" >Reviews by Rating</text>
<circle cx="659.4" cy="580.7" r="6.6" fill="#A1C07E"/>
<text x="674.4" y="581.3000000000001" font-size="16" fill="#4C5773" font-weight="700" text-anchor="start" dominant-baseline="central" letter-spacing="0" >1</text>
<circle cx="659.4" cy="602.1" r="6.6" fill="#A78BC6"/>
<text x="674.4" y="602.7" font-size="16" fill="#4C5773" font-weight="700" text-anchor="start" dominant-baseline="central" letter-spacing="0" >2</text>
<circle cx="659.4" cy="623.5" r="6.6" fill="#E38E8C"/>
<text x="674.4" y="624.1" font-size="16" fill="#4C5773" font-weight="700" text-anchor="start" dominant-baseline="central" letter-spacing="0" >3</text>
<circle cx="659.4" cy="644.9" r="6.6" fill="#F2D370"/>
<text x="674.4" y="645.5000000000001" font-size="16" fill="#4C5773" font-weight="700" text-anchor="start" dominant-baseline="central" letter-spacing="0" >4</text>
<circle cx="659.4" cy="666.3" r="6.6" fill="#629CDE"/>
<text x="674.4" y="666.9000000000001" font-size="16" fill="#4C5773" font-weight="700" text-anchor="start" dominant-baseline="central" letter-spacing="0" >5</text>
<text x="837.6" y="616.3" font-size="22.2" fill="#4C5773" font-weight="700" text-anchor="middle" dominant-baseline="central" letter-spacing="0" >1,112</text>
<text x="837.2" y="638.6" font-size="13.6" fill="#B3B8C4" font-weight="400" text-anchor="middle" dominant-baseline="central" letter-spacing="0" >TOTAL</text>
</svg>

<!-- menu -->
<div class="menu">
  <div class="abs" style="left:0;top:58px;width:208px;height:50px;background:#629CDD"></div>
</div>
<div class="t" style="left:688px;top:89px;font-size:13.3px;letter-spacing:-0.25px;color:#4C5773">Dashboard subscriptions</div>
<div class="t" style="left:688px;top:139px;font-size:13.3px;letter-spacing:-0.3px;color:#fff">Sharing and embedding</div>
</body></html>
